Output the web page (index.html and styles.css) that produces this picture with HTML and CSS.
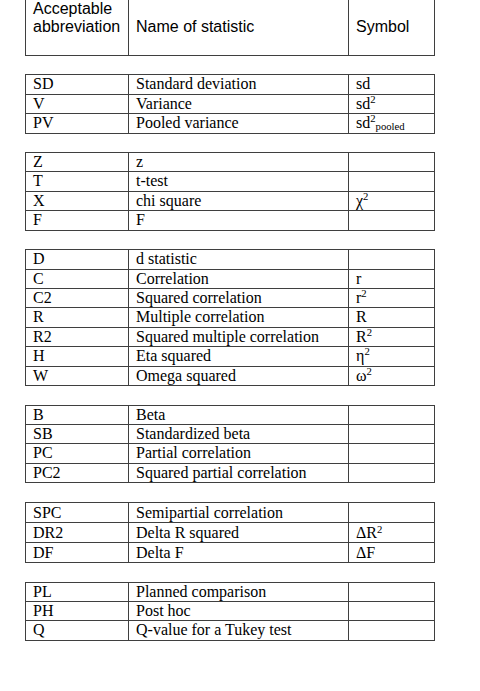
FILE: index.html
```html
<!DOCTYPE html>
<html>
<head>
<meta charset="utf-8">
<link rel="stylesheet" href="styles.css">
</head>
<body>
<div class="page">
  <table class="tbl hdr">
    <colgroup><col class="c1"><col class="c2"><col class="c3"></colgroup>
    <tr>
      <td>Acceptable abbreviation</td>
      <td class="low">Name of statistic</td>
      <td class="low">Symbol</td>
    </tr>
  </table>

  <table class="tbl">
    <colgroup><col class="c1"><col class="c2"><col class="c3"></colgroup>
    <tr><td>SD</td><td>Standard deviation</td><td>sd</td></tr>
    <tr><td>V</td><td>Variance</td><td>sd<span class="sup">2</span></td></tr>
    <tr><td>PV</td><td>Pooled variance</td><td>sd<span class="sup">2</span><span class="sub">pooled</span></td></tr>
  </table>

  <table class="tbl">
    <colgroup><col class="c1"><col class="c2"><col class="c3"></colgroup>
    <tr><td>Z</td><td>z</td><td></td></tr>
    <tr><td>T</td><td>t-test</td><td></td></tr>
    <tr><td>X</td><td>chi square</td><td>χ<span class="sup">2</span></td></tr>
    <tr><td>F</td><td>F</td><td></td></tr>
  </table>

  <table class="tbl">
    <colgroup><col class="c1"><col class="c2"><col class="c3"></colgroup>
    <tr><td>D</td><td>d statistic</td><td></td></tr>
    <tr><td>C</td><td>Correlation</td><td>r</td></tr>
    <tr><td>C2</td><td>Squared correlation</td><td>r<span class="sup">2</span></td></tr>
    <tr><td>R</td><td>Multiple correlation</td><td>R</td></tr>
    <tr><td>R2</td><td>Squared multiple correlation</td><td>R<span class="sup">2</span></td></tr>
    <tr><td>H</td><td>Eta squared</td><td>η<span class="sup">2</span></td></tr>
    <tr><td>W</td><td>Omega squared</td><td>ω<span class="sup">2</span></td></tr>
  </table>

  <table class="tbl">
    <colgroup><col class="c1"><col class="c2"><col class="c3"></colgroup>
    <tr><td>B</td><td>Beta</td><td></td></tr>
    <tr><td>SB</td><td>Standardized beta</td><td></td></tr>
    <tr><td>PC</td><td>Partial correlation</td><td></td></tr>
    <tr><td>PC2</td><td>Squared partial correlation</td><td></td></tr>
  </table>

  <table class="tbl tall">
    <colgroup><col class="c1"><col class="c2"><col class="c3"></colgroup>
    <tr><td>SPC</td><td>Semipartial correlation</td><td></td></tr>
    <tr><td>DR2</td><td>Delta R squared</td><td class="delta">ΔR<span class="sup">2</span></td></tr>
    <tr><td>DF</td><td>Delta F</td><td class="delta">ΔF</td></tr>
  </table>

  <table class="tbl">
    <colgroup><col class="c1"><col class="c2"><col class="c3"></colgroup>
    <tr><td>PL</td><td>Planned comparison</td><td></td></tr>
    <tr><td>PH</td><td>Post hoc</td><td></td></tr>
    <tr><td>Q</td><td>Q-value for a Tukey test</td><td></td></tr>
  </table>
</div>
</body>
</html>
```

FILE: styles.css
```css
html, body {
  margin: 0;
  padding: 0;
  background: #ffffff;
}

.page {
  padding-left: 25px;
  color: #000000;
}

.tbl {
  border-collapse: collapse;
  table-layout: fixed;
  width: 409px;
  margin-bottom: 18.3px;
  font-family: "Liberation Serif", "Times New Roman", serif;
  font-size: 16px;
  line-height: 18.45px;
}

.c1 { width: 103px; }
.c2 { width: 220px; }
.c3 { width: 86px; }

.tbl td {
  border: 1px solid #3f3f3f;
  padding: 0 0 0 7px;
  vertical-align: top;
  white-space: nowrap;
}

.hdr td {
  border-top: none;
  height: 55px;
  font-family: "Liberation Sans", Arial, sans-serif;
  line-height: 18.4px;
  white-space: normal;
}

.hdr td.low {
  padding-top: 18.4px;
  height: 36.6px;
}

.tall {
  line-height: 19.2px;
}

.sup {
  font-size: 10.7px;
  line-height: 0;
  vertical-align: 6px;
}

.sub {
  font-size: 10.7px;
  line-height: 0;
  vertical-align: -2px;
}

.delta .sup {
  vertical-align: 5px;
}
```
